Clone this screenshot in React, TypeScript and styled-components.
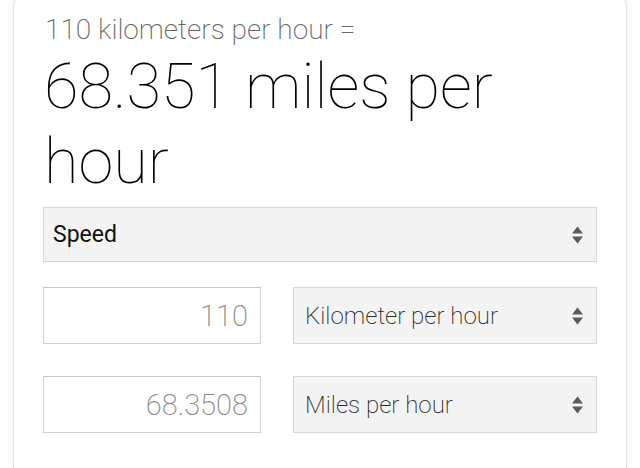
import styled, { createGlobalStyle } from "styled-components";

const GlobalStyle = createGlobalStyle`
  html, body {
    margin: 0;
    padding: 0;
    background: #ffffff;
    overflow: hidden;
  }
  body {
    font-family: Roboto, "Liberation Sans", Arial, sans-serif;
  }
`;

const Card = styled.div`
  margin: -4px 13px 0;
  height: 472px;
  box-sizing: border-box;
  padding: 17px 29px 0 29px;
  border: 1px solid #e3e3e3;
  border-bottom: none;
  border-radius: 9px 9px 0 0;
  box-shadow: 0 0 3px rgba(0, 0, 0, 0.08);
  background: #ffffff;
`;

const Question = styled.div`
  font-size: 28px;
  line-height: 32px;
  font-weight: 200;
  color: #666666;
  padding-left: 2px;
`;

const Answer = styled.div`
  margin-top: 3px;
  font-size: 63px;
  line-height: 75px;
  font-weight: 100;
  color: #000000;
  padding-left: 1px;
`;

const Box = styled.div<{ $filled?: boolean }>`
  box-sizing: border-box;
  height: 57px;
  display: flex;
  align-items: center;
  border: 1px solid ${(p) => (p.$filled ? "#d8d8d8" : "#d0d0d0")};
  border-top-color: ${(p) => (p.$filled ? "#d8d8d8" : "#c4c4c4")};
  background: ${(p) => (p.$filled ? "#f3f3f3" : "#ffffff")};
`;

const CategorySelect = styled(Box)`
  margin-top: 8px;
  height: 55px;
  justify-content: space-between;
  padding: 0 12px 0 9px;
  font-size: 23px;
  font-weight: 400;
  color: #111111;
`;

const UnitRow = styled.div`
  margin-top: 25px;
  display: grid;
  grid-template-columns: 218px 304px;
  column-gap: 32px;
  & + & {
    margin-top: 32px;
  }
`;

const ValueInput = styled(Box)`
  justify-content: flex-end;
  padding-right: 12px;
  font-size: 29px;
  font-weight: 200;
  color: #888888;
`;

const UnitSelect = styled(Box)`
  justify-content: space-between;
  padding: 0 12px 0 11px;
  font-size: 24px;
  font-weight: 200;
  color: #2a2a2a;
`;

function Arrows() {
  return (
    <svg width="13" height="20" viewBox="0 0 13 20">
      <path d="M1 8.5 L6.5 1.5 L12 8.5 Z" fill="#5a5a5a" />
      <path d="M1 11.5 L6.5 18.5 L12 11.5 Z" fill="#5a5a5a" />
    </svg>
  );
}

const rows = [
  { value: "110", unit: "Kilometer per hour" },
  { value: "68.3508", unit: "Miles per hour" },
];

export default function App() {
  return (
    <>
      <GlobalStyle />
      <Card>
        <Question>110 kilometers per hour =</Question>
        <Answer>68.351 miles per hour</Answer>
        <CategorySelect $filled>
          <span>Speed</span>
          <Arrows />
        </CategorySelect>
        {rows.map((r) => (
          <UnitRow key={r.unit}>
            <ValueInput>{r.value}</ValueInput>
            <UnitSelect $filled>
              <span>{r.unit}</span>
              <Arrows />
            </UnitSelect>
          </UnitRow>
        ))}
      </Card>
    </>
  );
}
